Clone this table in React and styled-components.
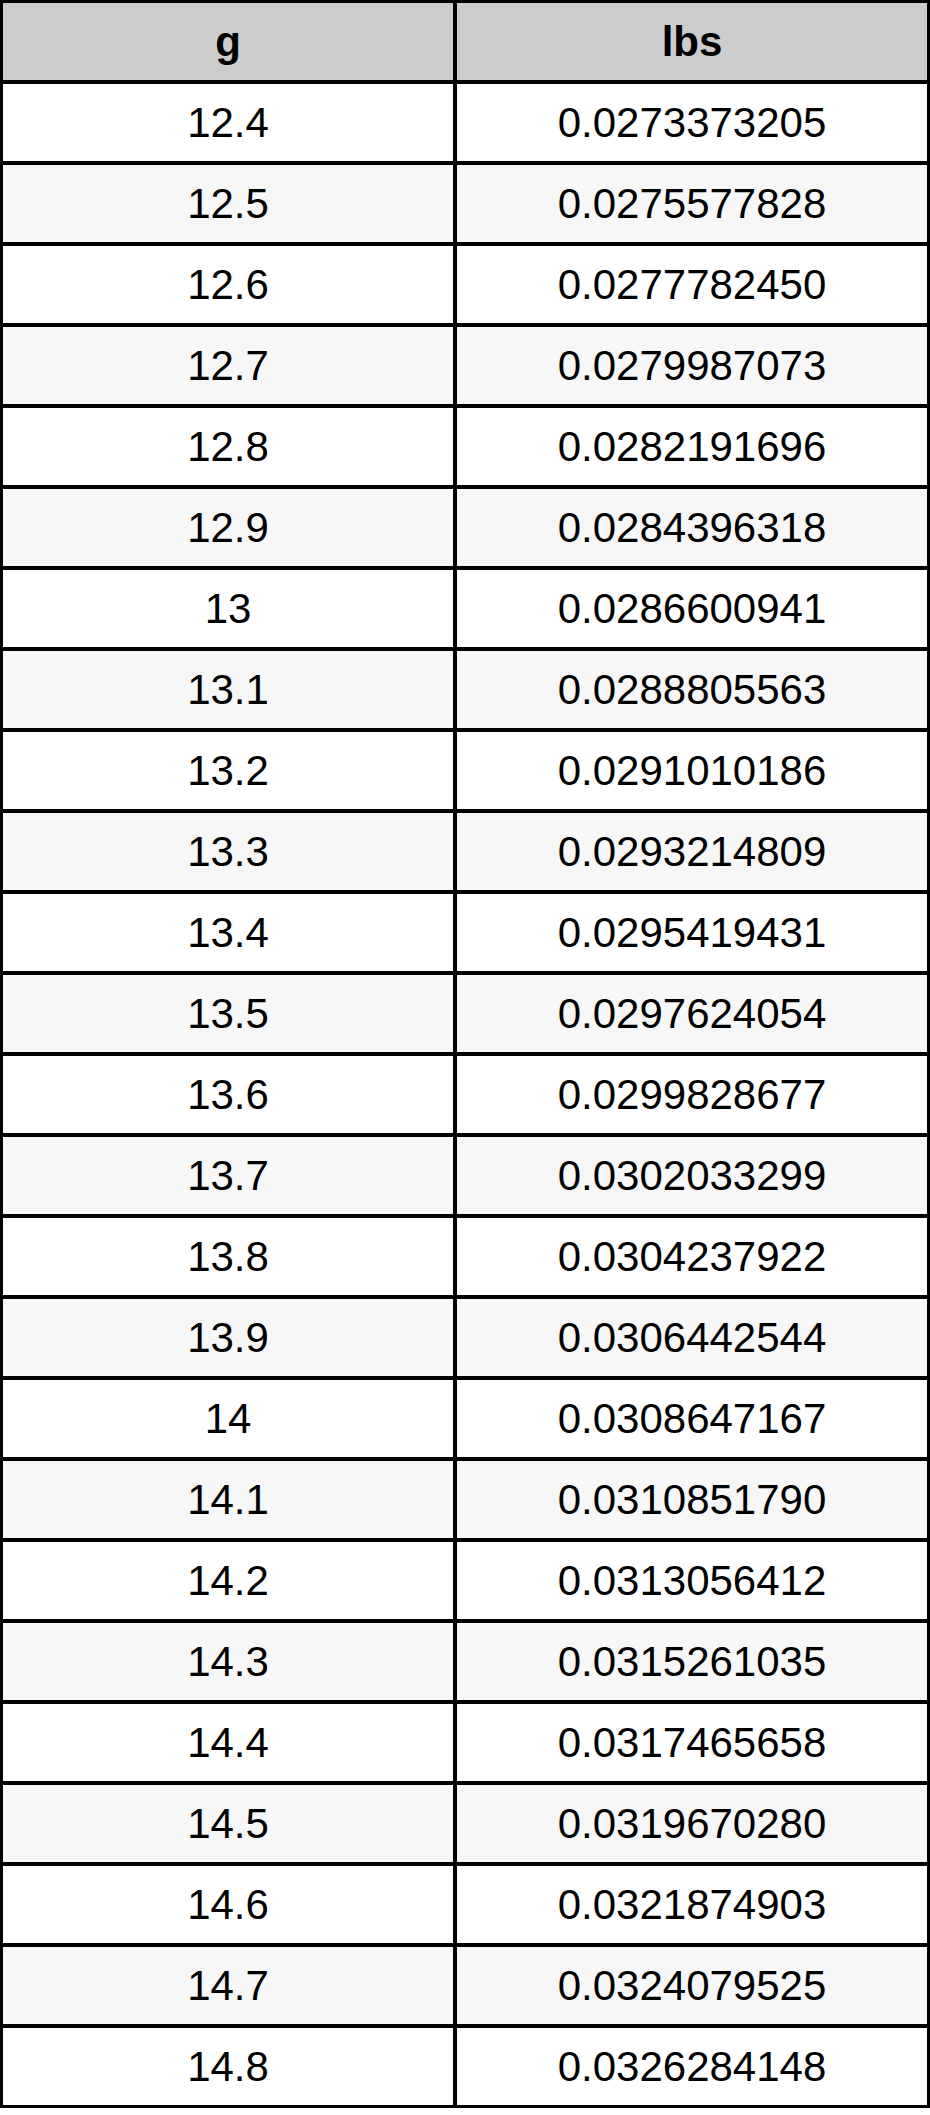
import React from "react";
import styled, { createGlobalStyle } from "styled-components";

const Global = createGlobalStyle`
  html, body { margin: 0; padding: 0; background: #fff; }
  body { font-family: "Liberation Sans", Arial, sans-serif; }
`;

const Table = styled.div`
  display: grid;
  grid-template-columns: 450px 470px;
  grid-auto-rows: 77px;
  gap: 4px;
  padding: 3px;
  width: 930px;
  box-sizing: border-box;
  background: #000;
`;

const Cell = styled.div`
  display: flex;
  align-items: center;
  justify-content: center;
  font-family: "Liberation Sans", Arial, sans-serif;
  font-size: 42px;
  color: #000;
  font-weight: ${(p) => (p.$head ? 700 : 400)};
  background: ${(p) => (p.$head ? "#cccccc" : p.$alt ? "#f7f7f7" : "#ffffff")};
`;

const rows = [
  ["12.4", "0.0273373205"],
  ["12.5", "0.0275577828"],
  ["12.6", "0.0277782450"],
  ["12.7", "0.0279987073"],
  ["12.8", "0.0282191696"],
  ["12.9", "0.0284396318"],
  ["13", "0.0286600941"],
  ["13.1", "0.0288805563"],
  ["13.2", "0.0291010186"],
  ["13.3", "0.0293214809"],
  ["13.4", "0.0295419431"],
  ["13.5", "0.0297624054"],
  ["13.6", "0.0299828677"],
  ["13.7", "0.0302033299"],
  ["13.8", "0.0304237922"],
  ["13.9", "0.0306442544"],
  ["14", "0.0308647167"],
  ["14.1", "0.0310851790"],
  ["14.2", "0.0313056412"],
  ["14.3", "0.0315261035"],
  ["14.4", "0.0317465658"],
  ["14.5", "0.0319670280"],
  ["14.6", "0.0321874903"],
  ["14.7", "0.0324079525"],
  ["14.8", "0.0326284148"],
];

export default function App() {
  return (
    <>
      <Global />
      <Table>
        <Cell $head>g</Cell>
        <Cell $head>lbs</Cell>
        {rows.map(([g, lbs], i) => (
          <React.Fragment key={g}>
            <Cell $alt={i % 2 === 1}>{g}</Cell>
            <Cell $alt={i % 2 === 1}>{lbs}</Cell>
          </React.Fragment>
        ))}
      </Table>
    </>
  );
}
